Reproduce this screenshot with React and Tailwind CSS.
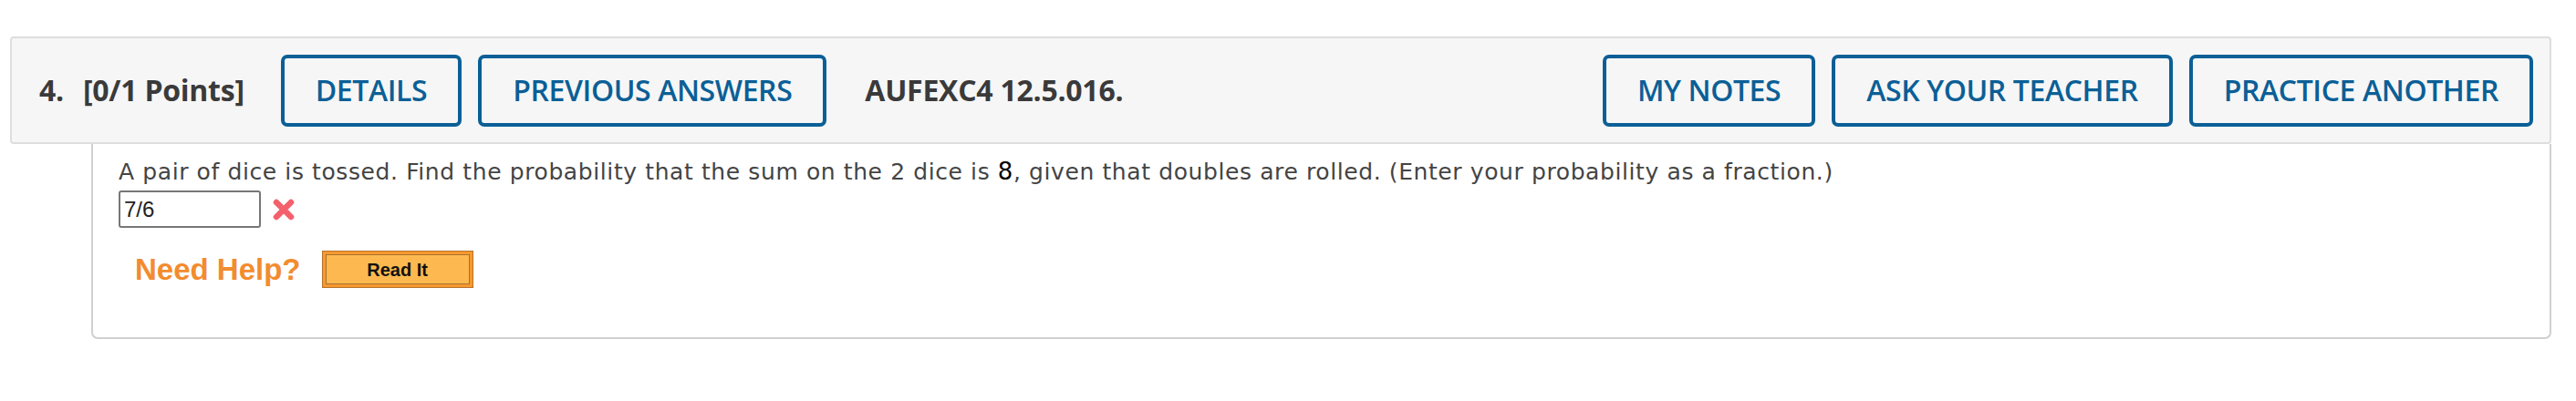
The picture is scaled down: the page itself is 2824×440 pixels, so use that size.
import React from 'react';

const headerFont = { fontFamily: '"Open Sans", "Liberation Sans", sans-serif' };

function OutlineButton({ children, className = '' }) {
  return (
    <button
      className={`h-[79px] shrink-0 border-4 border-[#0b5f96] rounded-[7px] bg-transparent px-[34px] text-[32px] font-semibold tracking-[-0.4px] text-[#0b5f96] leading-none ${className}`}
    >
      {children}
    </button>
  );
}

function WrongMark() {
  return (
    <svg width="26" height="26" viewBox="0 0 26 26" className="shrink-0">
      <path
        d="M5 5 L21 21 M21 5 L5 21"
        stroke="#f3505d"
        strokeWidth="6.5"
        strokeLinecap="round"
        opacity="0.9"
      />
    </svg>
  );
}

export default function App() {
  return (
    <div className="min-h-screen bg-white pt-[40px] pl-[11px] pr-[27px]">
      {/* Question header */}
      <div
        className="flex items-center h-[118px] border-2 border-[#dedede] rounded-[4px] bg-[#f6f6f6] pl-[30px] pr-[18px] text-[#3a3a3a]"
        style={headerFont}
      >
        <span className="text-[32px] font-bold tracking-[-0.25px]">4.</span>
        <span className="ml-[21px] text-[32px] font-bold tracking-[-0.25px]">[0/1 Points]</span>
        <OutlineButton className="ml-[40px]">DETAILS</OutlineButton>
        <OutlineButton className="ml-[18px]">PREVIOUS ANSWERS</OutlineButton>
        <span className="ml-[42px] text-[32px] font-bold tracking-[-0.25px]">AUFEXC4 12.5.016.</span>
        <div className="flex-1" />
        <OutlineButton>MY NOTES</OutlineButton>
        <OutlineButton className="ml-[18px]">ASK YOUR TEACHER</OutlineButton>
        <OutlineButton className="ml-[18px]">PRACTICE ANOTHER</OutlineButton>
      </div>

      {/* Question body */}
      <div className="ml-[89px] h-[214px] border-2 border-t-0 border-[#d0d0d0] rounded-b-[7px] pl-[28px] pt-[15px]">
        <p
          className="text-[25px] leading-[30px] tracking-[0.6px] text-[#444]"
          style={{ fontFamily: '"DejaVu Sans", Verdana, sans-serif' }}
        >
          A pair of dice is tossed. Find the probability that the sum on the 2 dice is{' '}
          <span className="text-black text-[26px]">8</span>, given that doubles are rolled. (Enter your
          probability as a fraction.)
        </p>

        <div className="mt-[5px] flex items-center gap-[12px]">
          <input
            defaultValue="7/6"
            className="h-[41px] w-[156px] border-2 border-[#777] rounded-[3px] px-[4px] text-[24px] text-[#222] outline-none"
            style={{ fontFamily: '"Liberation Sans", Arial, sans-serif' }}
          />
          <WrongMark />
        </div>

        <div
          className="mt-[25px] ml-[18px] flex items-center"
          style={{ fontFamily: '"Liberation Sans", Arial, sans-serif' }}
        >
          <span className="text-[33px] font-bold text-[#f28c2f] leading-none">Need Help?</span>
          <button className="ml-[23px] h-[41px] w-[166px] border border-[#b5732c] bg-[#f6992e] p-[3px]">
            <span className="flex h-full w-full items-center justify-center border border-[#a8702f] bg-[#fdb94f] text-[20px] font-bold text-[#111] leading-none">
              Read It
            </span>
          </button>
        </div>
      </div>
    </div>
  );
}
